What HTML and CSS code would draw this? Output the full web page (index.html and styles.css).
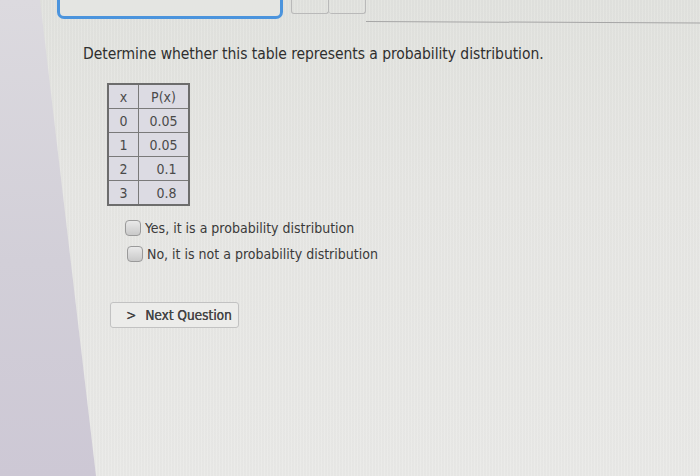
FILE: index.html
```html
<!DOCTYPE html>
<html>
<head>
<meta charset="utf-8">
<link rel="stylesheet" href="styles.css">
</head>
<body>
<div class="screen">
  <div class="panel">
    <div class="topbar">
      <div class="answer-box"></div>
      <div class="tabs">
        <div class="tab"></div>
        <div class="tab"></div>
      </div>
      <div class="rule"></div>
    </div>
    <div class="content">
      <p class="question">Determine whether this table represents a probability distribution.</p>
      <table class="dist">
        <tr><th>x</th><th>P(x)</th></tr>
        <tr><td>0</td><td>0.05</td></tr>
        <tr><td>1</td><td>0.05</td></tr>
        <tr><td>2</td><td class="shift">0.1</td></tr>
        <tr><td>3</td><td class="shift">0.8</td></tr>
      </table>
      <div class="options">
        <label class="option"><span class="box"></span><span>Yes, it is a probability distribution</span></label>
        <label class="option"><span class="box"></span><span>No, it is not a probability distribution</span></label>
      </div>
      <button class="next"><span class="chev">&gt;</span>Next Question</button>
    </div>
  </div>
</div>
</body>
</html>
```
FILE: styles.css
```css
html, body {
  margin: 0;
  padding: 0;
}
body {
  width: 700px;
  height: 476px;
  overflow: hidden;
  background: linear-gradient(180deg, #dcdadf 0%, #d2cfd8 55%, #cdc8d5 100%);
  font-family: "DejaVu Sans Condensed", "DejaVu Sans", sans-serif;
}
.screen {
  width: 700px;
  height: 476px;
}
.panel {
  width: 700px;
  height: 476px;
  background:
    repeating-linear-gradient(90deg, rgba(255,255,255,0.06) 0 1px, rgba(0,0,0,0.015) 1px 3px),
    linear-gradient(180deg, #e2e3df 0%, #e7e7e4 40%, #eaeae8 100%);
  clip-path: polygon(40px 0, 100% 0, 100% 100%, 96px 100%);
}
.topbar {
  height: 24px;
  display: flex;
  align-items: flex-start;
  padding-left: 57px;
}
.answer-box {
  width: 220px;
  height: 22px;
  margin-top: -6px;
  border: 3px solid #4b94dd;
  border-top: none;
  border-radius: 0 0 7px 7px;
  background: #e4e5e2;
}
.tabs {
  display: flex;
  margin-left: 8px;
  margin-top: -4px;
}
.tab {
  width: 36px;
  height: 17px;
  border: 1px solid #b9b9b9;
  border-top: none;
  border-radius: 0 0 3px 3px;
}
.tab + .tab {
  border-left: none;
}
.rule {
  flex: 1;
  height: 0;
  margin-top: 21px;
  border-top: 1px solid #a6a6a6;
  transform: rotate(0.25deg);
  transform-origin: left;
}
.content {
  padding-left: 83px;
}
.question {
  margin: 21px 0 0 0;
  font-size: 15.5px;
  color: #2f2f2f;
  letter-spacing: -0.05px;
}
.dist {
  margin: 20px 0 0 24px;
  border-collapse: collapse;
  border: 2px solid #6d6d6d;
  background: #dcdbe3;
  font-size: 14px;
  color: #4a4a4a;
}
.dist th, .dist td {
  border: 1px solid #7a7a7a;
  height: 23px;
  padding: 0;
  text-align: center;
  font-weight: normal;
}
.dist th:first-child, .dist td:first-child {
  width: 29px;
}
.dist th:last-child, .dist td:last-child {
  width: 49px;
}
.dist td.shift {
  padding-left: 6px;
  width: 43px;
}
.options {
  margin: 14px 0 0 42px;
  display: flex;
  flex-direction: column;
  gap: 10px;
}
.option {
  display: flex;
  align-items: center;
  gap: 4px;
  font-size: 14px;
  color: #3a3a3a;
}
.option + .option {
  margin-left: 2px;
}
.box {
  width: 14px;
  height: 14px;
  border: 1px solid #9a9a9a;
  border-radius: 4px;
  background: linear-gradient(180deg, #e9e9e9, #c9c9c9);
}
.next {
  margin: 40px 0 0 27px;
  width: 129px;
  height: 26px;
  display: flex;
  align-items: center;
  padding: 0 0 0 15px;
  border: 1px solid #c2c2c2;
  border-radius: 3px;
  background: #ececea;
  font-family: "DejaVu Sans Condensed", "DejaVu Sans", sans-serif;
  font-size: 13.5px;
  font-weight: normal;
  color: #444;
  text-shadow: 0.3px 0 0 #444;
}
.chev {
  margin-right: 9px;
}
```
